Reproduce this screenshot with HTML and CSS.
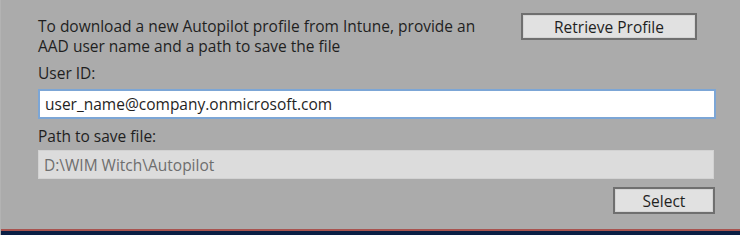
FILE: index.html
```html
<!DOCTYPE html>
<html lang="en">
<head>
    <meta charset="UTF-8">
    <title>Autopilot profile</title>
    <link rel="stylesheet" href="styles.css">
</head>
<body>
    <div class="window">
        <div class="panel">
            <div class="top-row">
                <p class="intro">To download a new Autopilot profile from Intune, provide an<br>AAD user name and a path to save the file</p>
                <button class="btn btn-retrieve">Retrieve Profile</button>
            </div>

            <label class="field-label" for="user-id">User ID:</label>
            <input id="user-id" class="text-input focused" type="text" value="user_name@company.onmicrosoft.com">

            <label class="field-label path-label" for="save-path">Path to save file:</label>
            <input id="save-path" class="text-input readonly" type="text" value="D:\WIM Witch\Autopilot" readonly>

            <div class="select-row">
                <button class="btn btn-select">Select</button>
            </div>
        </div>
        <div class="taskbar"></div>
    </div>
</body>
</html>
```

FILE: styles.css
```css
:root {
    --bg-color: #ababab;
    --text-color: #1f1f1f;
    --btn-bg: #e1e1e1;
    --btn-border: #6f6f6f;
    --focus-border: #7ca6d6;
    --readonly-bg: #dcdcdc;
    --readonly-text: #6e6e6e;
}

* { box-sizing: border-box; margin: 0; padding: 0; }

body {
    font-family: "Open Sans", "Noto Sans", sans-serif;
    background-color: var(--bg-color);
    color: var(--text-color);
    width: 740px;
    height: 235px;
    overflow: hidden;
}

.window {
    display: flex;
    flex-direction: column;
    height: 235px;
    border-left: 1px solid #b3b3b3;
}

.panel {
    flex: 1;
    padding: 13px 24px 0 37px;
    font-size: 15.5px;
}

.top-row {
    display: flex;
    justify-content: space-between;
    align-items: flex-start;
}

.intro {
    line-height: 20px;
    padding-top: 3px;
}

.btn {
    font-family: inherit;
    font-size: 15.5px;
    color: var(--text-color);
    background-color: var(--btn-bg);
    border: 2px solid var(--btn-border);
    box-shadow: inset 0 0 0 1px #d4d4d4;
}

.btn-retrieve {
    width: 176px;
    height: 27px;
    margin-right: 19px;
}

.field-label {
    display: block;
    line-height: 18px;
    margin-top: 8px;
}

.text-input {
    display: block;
    width: 100%;
    height: 30px;
    font-family: inherit;
    font-size: 15.5px;
    padding: 0 5px;
    margin-top: 7px;
    outline: none;
}

.text-input.focused {
    background: #fff;
    color: var(--text-color);
    border: 2px solid var(--focus-border);
}

.path-label { margin-top: 8px; }

.text-input.readonly {
    width: 676px;
    height: 29px;
    background: var(--readonly-bg);
    color: var(--readonly-text);
    border: 1px solid #d2d2d2;
    margin-top: 5px;
}

.select-row {
    display: flex;
    justify-content: flex-end;
    margin-top: 8px;
}

.btn-select {
    width: 102px;
    height: 27px;
    margin-right: 1px;
}

.taskbar {
    height: 6px;
    border-top: 2px solid #a8534f;
    background: #0b1f45;
}
```
